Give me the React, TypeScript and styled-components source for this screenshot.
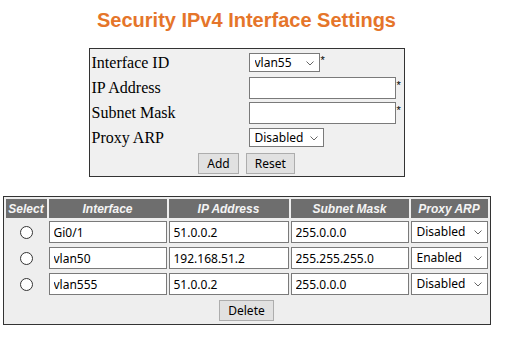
import React from "react";
import styled, { createGlobalStyle } from "styled-components";

const GlobalStyle = createGlobalStyle`
    body {
        margin: 0;
        background: #ffffff;
    }
`;

const CONTROL_FONT = `"Noto Sans", "DejaVu Sans", sans-serif`;

const Page = styled.div({
    width: "493px",
    display: "flex",
    flexDirection: "column",
    alignItems: "center",
});

const Title = styled.h1({
    margin: "8px 0 16px",
    height: "24px",
    lineHeight: "24px",
    fontFamily: `"Liberation Sans", Arial, sans-serif`,
    fontSize: "20px",
    fontWeight: "bold",
    color: "#e5752a",
});

const FormBox = styled.div({
    width: "316px",
    boxSizing: "border-box",
    border: "1px solid #333333",
    background: "#f0f0f0",
    padding: "1px 0 1px 2px",
    display: "grid",
    gridTemplateColumns: "157px 1fr",
    gridAutoRows: "25px",
});

const Label = styled.div({
    display: "flex",
    alignItems: "center",
    fontFamily: `"Liberation Serif", "Times New Roman", serif`,
    fontSize: "16px",
    color: "#000000",
});

const Field = styled.div({
    display: "flex",
    alignItems: "center",
});

const Required = styled.span({
    alignSelf: "flex-start",
    marginTop: "5px",
    marginLeft: "1px",
    fontFamily: `"Liberation Sans", Arial, sans-serif`,
    fontSize: "11px",
    lineHeight: "10px",
    color: "#000000",
});

const TextBox = styled.input<{ $width?: string }>((props) => ({
    width: props.$width ?? "100%",
    height: "22px",
    boxSizing: "border-box",
    margin: 0,
    padding: "0 4px",
    border: "1px solid #7a7a7a",
    borderRadius: 0,
    background: "#ffffff",
    fontFamily: CONTROL_FONT,
    fontSize: "12px",
    color: "#000000",
    outline: "none",
}));

const SelectWrap = styled.span<{ $width: string }>((props) => ({
    position: "relative",
    display: "inline-flex",
    width: props.$width,
}));

const SelectBox = styled.select({
    appearance: "none",
    width: "100%",
    height: "19px",
    boxSizing: "border-box",
    margin: 0,
    padding: "0 0 0 5px",
    border: "1px solid #7a7a7a",
    borderRadius: 0,
    background: "#ffffff",
    fontFamily: CONTROL_FONT,
    fontSize: "12px",
    lineHeight: "17px",
    color: "#000000",
    outline: "none",
});

const TableSelectBox = styled(SelectBox)({
    height: "22px",
    lineHeight: "20px",
});

const Chevron = styled.svg({
    position: "absolute",
    right: "6px",
    top: "50%",
    marginTop: "-2px",
    pointerEvents: "none",
});

const ButtonRow = styled.div({
    gridColumn: "1 / -1",
    height: "26px",
    display: "flex",
    justifyContent: "center",
    alignItems: "center",
    gap: "7px",
    marginLeft: "-2px",
});

const Button = styled.button({
    height: "21px",
    boxSizing: "border-box",
    margin: 0,
    padding: "0 8px",
    border: "1px solid #adadad",
    borderRadius: 0,
    background: "#e1e1e1",
    fontFamily: CONTROL_FONT,
    fontSize: "12px",
    color: "#000000",
    cursor: "pointer",
});

const Table = styled.table({
    marginTop: "19px",
    width: "488px",
    tableLayout: "fixed",
    borderCollapse: "separate",
    borderSpacing: "2px",
    border: "1px solid #333333",
    background: "#eeeeee",
});

const HeadCell = styled.th({
    height: "19px",
    padding: 0,
    background: "#6e6e6e",
    color: "#f4f4f4",
    fontFamily: `"Liberation Sans", Arial, sans-serif`,
    fontSize: "12px",
    fontWeight: "bold",
    fontStyle: "italic",
    textAlign: "center",
});

const Cell = styled.td<{ $center?: boolean }>((props) => ({
    height: "22px",
    padding: "1px 0",
    textAlign: props.$center ? "center" : "left",
    verticalAlign: "middle",
}));

const Radio = styled.input({
    appearance: "none",
    display: "block",
    width: "13px",
    height: "13px",
    margin: "0 auto",
    boxSizing: "border-box",
    border: "1px solid #333333",
    borderRadius: "50%",
    background: "#ffffff",
});

function Select({ value, options, width, tall }: { value: string; options: string[]; width: string; tall?: boolean }) {
    const Box = tall ? TableSelectBox : SelectBox;
    return (
        <SelectWrap $width={width}>
            <Box defaultValue={value}>
                {options.map((o) => (
                    <option key={o}>{o}</option>
                ))}
            </Box>
            <Chevron width="8" height="5" viewBox="0 0 8 5">
                <polyline points="0.5,0.5 4,4 7.5,0.5" fill="none" stroke="#666666" strokeWidth="1" />
            </Chevron>
        </SelectWrap>
    );
}

const rows = [
    { iface: "Gi0/1", ip: "51.0.0.2", mask: "255.0.0.0", arp: "Disabled" },
    { iface: "vlan50", ip: "192.168.51.2", mask: "255.255.255.0", arp: "Enabled" },
    { iface: "vlan555", ip: "51.0.0.2", mask: "255.0.0.0", arp: "Disabled" },
];

export default function App() {
    return (
        <Page>
            <GlobalStyle />
            <Title>Security IPv4 Interface Settings</Title>
            <FormBox>
                <Label>Interface ID</Label>
                <Field>
                    <Select value="vlan55" options={["vlan55", "vlan50", "vlan555"]} width="71px" />
                    <Required>*</Required>
                </Field>
                <Label>IP Address</Label>
                <Field>
                    <TextBox $width="147px" />
                    <Required>*</Required>
                </Field>
                <Label>Subnet Mask</Label>
                <Field>
                    <TextBox $width="147px" />
                    <Required>*</Required>
                </Field>
                <Label>Proxy ARP</Label>
                <Field>
                    <Select value="Disabled" options={["Disabled", "Enabled"]} width="75px" />
                </Field>
                <ButtonRow>
                    <Button>Add</Button>
                    <Button>Reset</Button>
                </ButtonRow>
            </FormBox>
            <Table>
                <colgroup>
                    <col style={{ width: "41px" }} />
                    <col style={{ width: "118px" }} />
                    <col style={{ width: "120px" }} />
                    <col style={{ width: "118px" }} />
                    <col style={{ width: "77px" }} />
                </colgroup>
                <thead>
                    <tr>
                        <HeadCell>Select</HeadCell>
                        <HeadCell>Interface</HeadCell>
                        <HeadCell>IP Address</HeadCell>
                        <HeadCell>Subnet Mask</HeadCell>
                        <HeadCell>Proxy ARP</HeadCell>
                    </tr>
                </thead>
                <tbody>
                    {rows.map((r, i) => (
                        <tr key={`row-${i}`}>
                            <Cell $center>
                                <Radio type="radio" name="select" />
                            </Cell>
                            <Cell>
                                <TextBox defaultValue={r.iface} />
                            </Cell>
                            <Cell>
                                <TextBox defaultValue={r.ip} />
                            </Cell>
                            <Cell>
                                <TextBox defaultValue={r.mask} />
                            </Cell>
                            <Cell>
                                <Select value={r.arp} options={["Disabled", "Enabled"]} width="100%" tall />
                            </Cell>
                        </tr>
                    ))}
                    <tr>
                        <Cell $center colSpan={5}>
                            <Button>Delete</Button>
                        </Cell>
                    </tr>
                </tbody>
            </Table>
        </Page>
    );
}
